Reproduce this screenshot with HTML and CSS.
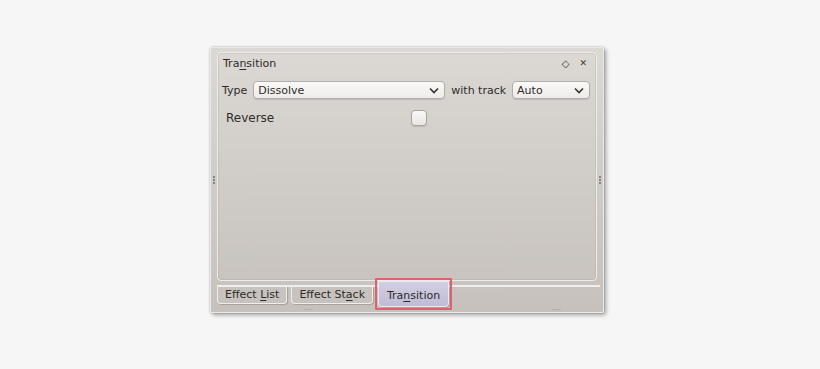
FILE: index.html
```
<!DOCTYPE html>
<html lang="en">
<head>
  <meta charset="UTF-8" />
  <title>Transition</title>
  <link rel="stylesheet" href="styles.css">
</head>
<body>
<div class="stage">
  <div class="window">
    <span class="grip grip-left"></span>
    <span class="grip grip-right"></span>
    <div class="panel">
      <div class="panel-head">
        <span class="panel-title">Tra<u>n</u>sition</span>
        <span class="head-btns">
          <span class="btn-float">&#9671;</span>
          <span class="btn-close">&#10005;</span>
        </span>
      </div>
      <div class="row">
        <span class="lbl">Type</span>
        <div class="combo combo-type"><span>Dissolve</span><svg width="10" height="7" viewBox="0 0 10 7"><path d="M1 1.5 L5 5.5 L9 1.5" fill="none" stroke="#333" stroke-width="1.6"/></svg></div>
        <span class="lbl lbl-track">with track</span>
        <div class="combo combo-track"><span>Auto</span><svg width="10" height="7" viewBox="0 0 10 7"><path d="M1 1.5 L5 5.5 L9 1.5" fill="none" stroke="#333" stroke-width="1.6"/></svg></div>
      </div>
      <div class="row row-rev">
        <span class="rev-lbl">Reverse</span>
        <span class="check"></span>
      </div>
    </div>
    <div class="tabbar">
      <div class="tab">Effect <u>L</u>ist</div>
      <div class="tab">Effect St<u>a</u>ck</div>
      <div class="tab-hl"><div class="tab tab-on">Tra<u>n</u>sition</div></div>
    </div>
    <div class="dots">
      <span>....</span>
      <span>....</span>
    </div>
  </div>
</div>
</body>
</html>
```

FILE: styles.css
```
* { box-sizing: border-box; }
body { margin:0; background:#f6f6f6; font-family:'DejaVu Sans',sans-serif; color:#2e2c2a; }
u { text-decoration-thickness:1px; text-underline-offset:2px; }
.stage { padding:47px 0 0 210px; height:369px; }
.window { position:relative; width:394px; height:266px; background:linear-gradient(#dcd8d4,#d2cec9 40%,#c6c1bc); border:1px solid #ebe9e7; border-radius:2px; box-shadow:2px 2px 4px rgba(0,0,0,.35), 0 0 2px rgba(0,0,0,.25); padding:4px 6px 0 6px; }
.grip { position:absolute; top:128px; width:2px; height:8px; background:repeating-linear-gradient(#8a8580 0 2px, transparent 2px 3px); }
.grip-left { left:2px; }
.grip-right { right:2px; }
.panel { height:229px; border:1px solid #eeecea; border-radius:4px; box-shadow:inset 0 0 0 1px rgba(160,155,150,.25); padding:2px 4px 0 4px; }
.panel-head { display:flex; justify-content:space-between; align-items:center; height:16px; font-size:11px; }
.panel-title { padding-left:1px; }
.head-btns { display:flex; gap:10px; font-size:9px; color:#3a3836; padding-right:5px; }
.btn-float { font-size:10px; font-weight:bold; }
.row { display:flex; align-items:center; margin-top:10px; height:18px; font-size:11px; white-space:nowrap; }
.row > * { flex-shrink:0; }
.lbl { margin-right:6px; }
.lbl-track { margin-left:6px; margin-right:6px; }
.combo { height:18px; display:flex; justify-content:space-between; align-items:center; padding:0 5px 0 4px; background:linear-gradient(#fbfaf9,#eeebe8); border:1px solid #b3aea9; border-radius:4px; box-shadow:0 1px 1px rgba(0,0,0,.12); }
.combo-type { width:192px; }
.combo-track { width:78px; }
.row-rev { margin-top:10px; font-size:12px; }
.rev-lbl { padding-left:4px; width:189px; }
.check { width:16px; height:16px; border:1px solid #aaa5a0; border-radius:4px; background:linear-gradient(#faf9f8,#e9e6e3); box-shadow:0 1px 1px rgba(0,0,0,.12); }
.tabbar { display:flex; align-items:flex-start; gap:4px; margin-top:4px; margin-right:-3px; border-top:2px solid #f0eeec; height:22px; font-size:11px; }
.tab { height:18px; margin-top:-1px; padding:2px 7px 0 7px; border:1px solid #f0eeec; border-top:none; border-radius:0 0 4px 4px; box-shadow:1px 1px 1px rgba(0,0,0,.18); color:#2e2c2a; }
.tab-hl { margin-top:-9px; margin-left:-2px; padding:1px; border:2px solid #e2606e; border-radius:1px; }
.tab-on { margin-top:0; width:71px; height:26px; padding:7px 0 0 0; text-align:center; background:linear-gradient(#d2cfe3,#bfbbd5); border:1px solid #eceaf2; border-radius:0 0 4px 4px; }
.dots { display:flex; justify-content:space-between; padding:0 36px 0 87px; font-size:7px; color:#8a8580; line-height:4px; margin-top:-1px; }
```
